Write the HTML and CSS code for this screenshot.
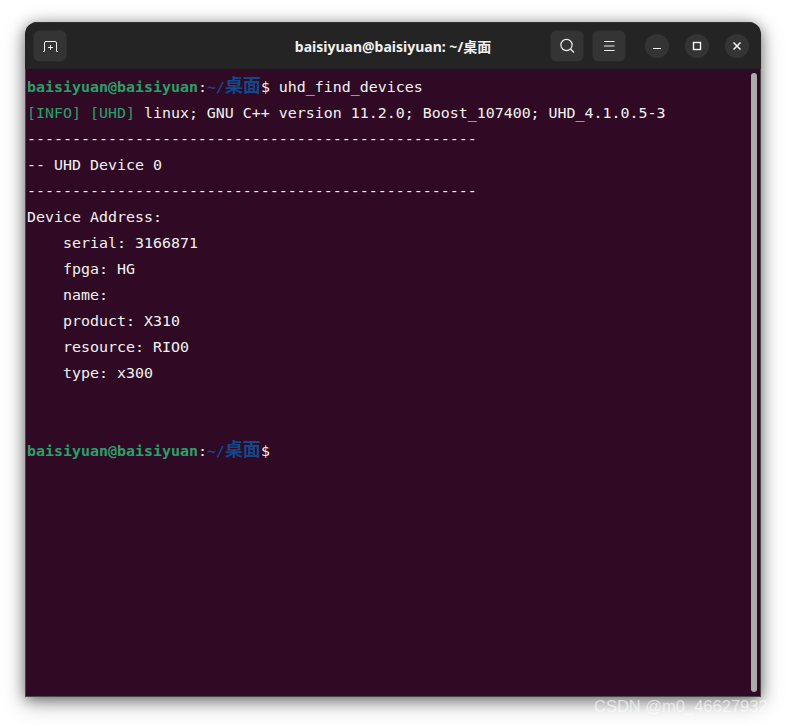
FILE: index.html
```html
<!DOCTYPE html>
<html>
<head>
  <meta charset="utf-8">
  <title>baisiyuan@baisiyuan: ~/桌面</title>
  <link rel="stylesheet" href="styles.css">
</head>
<body>
  <div class="window">
    <div class="titlebar">
      <button class="head-btn">
        <svg width="16" height="16" viewBox="0 0 16 16" fill="none" stroke="#eeeeee" stroke-width="1">
          <path d="M1 13.5h1.5V5a1.5 1.5 0 0 1 1.5-1.5h9A1.5 1.5 0 0 1 14.500 5v8.500H16"/>
          <path d="M8.500 7v5M6 9.500h5"/>
        </svg>
      </button>
      <div class="title">baisiyuan@baisiyuan: ~/桌面</div>
      <div class="actions">
        <button class="head-btn">
          <svg width="16" height="16" viewBox="0 0 16 16" fill="none" stroke="#eeeeee" stroke-width="1.2">
            <circle cx="7.500" cy="7" r="5.600"/>
            <path d="M11.500 11l3.500 3.500"/>
          </svg>
        </button>
        <button class="head-btn">
          <svg width="16" height="16" viewBox="0 0 16 16" fill="none" stroke="#eeeeee" stroke-width="1">
            <path d="M3 3.500h10.500M3 8h10.500M3 12.500h10.500"/>
          </svg>
        </button>
      </div>
      <div class="win-controls">
        <button class="round-btn">
          <svg width="16" height="16" viewBox="0 0 16 16" fill="none" stroke="#f4f4f4" stroke-width="1.200">
            <path d="M4 10.500h8"/>
          </svg>
        </button>
        <button class="round-btn">
          <svg width="16" height="16" viewBox="0 0 16 16" fill="none" stroke="#f4f4f4" stroke-width="1.400">
            <rect x="4.500" y="4.500" width="7" height="7"/>
          </svg>
        </button>
        <button class="round-btn">
          <svg width="16" height="16" viewBox="0 0 16 16" fill="none" stroke="#f4f4f4" stroke-width="1.500">
            <path d="M4.500 4.500l7 7M11.500 4.500l-7 7"/>
          </svg>
        </button>
      </div>
    </div>
    <div class="terminal">
      <pre class="output"><span class="green">baisiyuan@baisiyuan</span>:<span class="blue">~/<span class="cjk">桌面</span></span>$ uhd_find_devices
<span class="info">[INFO] [UHD]</span> linux; GNU C++ version 11.2.0; Boost_107400; UHD_4.1.0.5-3
--------------------------------------------------
-- UHD Device 0
--------------------------------------------------
Device Address:
    serial: 3166871
    fpga: HG
    name: 
    product: X310
    resource: RIO0
    type: x300


<span class="green">baisiyuan@baisiyuan</span>:<span class="blue">~/<span class="cjk">桌面</span></span>$</pre>
      <div class="scrollbar"></div>
    </div>
  </div>
  <div class="watermark">CSDN @m0_46627932</div>
</body>
</html>
```

FILE: styles.css
```css
html,
body {
  margin: 0;
  padding: 0;
  height: 725px;
  overflow: hidden;
  background-color: #ffffff;
}

body {
  padding: 22px 25px 0;
  box-sizing: border-box;
  position: relative;
}

.window {
  width: 736px;
  height: 675px;
  display: flex;
  flex-direction: column;
  border-radius: 12px 12px 0 0;
  overflow: hidden;
  box-shadow: 0 3px 14px rgba(0, 0, 0, 0.5), 0 6px 26px rgba(0, 0, 0, 0.22);
}

.titlebar {
  height: 47px;
  flex: none;
  display: flex;
  align-items: center;
  padding: 0 12px 0 8px;
  box-sizing: border-box;
  position: relative;
  background-color: #242424;
  border-top: 1px solid #333333;
}

.title {
  position: absolute;
  left: 0;
  right: 0;
  text-align: center;
  color: #f0f0f0;
  font-family: "Noto Sans", "Noto Sans CJK SC", sans-serif;
  font-size: 14px;
  font-weight: bold;
}

.head-btn {
  width: 34px;
  height: 32px;
  padding: 0;
  display: flex;
  align-items: center;
  justify-content: center;
  background-color: #343434;
  border: 1px solid #2b2b2b;
  border-radius: 6px;
}

.actions {
  display: flex;
  gap: 8px;
  margin-left: auto;
  position: relative;
}

.win-controls {
  display: flex;
  gap: 16px;
  margin-left: 19px;
  position: relative;
}

.round-btn {
  width: 24px;
  height: 24px;
  padding: 0;
  display: flex;
  align-items: center;
  justify-content: center;
  background-color: #343434;
  border: none;
  border-radius: 50%;
}

.terminal {
  flex: 1;
  position: relative;
  background-color: #300a24;
  border: 1px solid #484848;
  border-top: none;
}

.output {
  margin: 0;
  padding: 5px 0 0 1px;
  color: #f2f2f2;
  font-family: "DejaVu Sans Mono", "Noto Sans CJK SC", monospace;
  font-size: 14.95px;
  line-height: 26px;
}

.green {
  color: #26a269;
  font-weight: bold;
}

.blue {
  color: #12488b;
  font-weight: bold;
}

.cjk {
  font-size: 18px;
  line-height: 1;
}

.info {
  color: #26a269;
}

.scrollbar {
  position: absolute;
  top: 4px;
  bottom: 4px;
  right: 3px;
  width: 6px;
  border-radius: 3px;
  background-color: #ababab;
}

.watermark {
  position: absolute;
  left: 594px;
  top: 697px;
  color: rgba(255, 255, 255, 0.6);
  font-family: "Liberation Sans", sans-serif;
  font-size: 16.500px;
  white-space: nowrap;
}
```
